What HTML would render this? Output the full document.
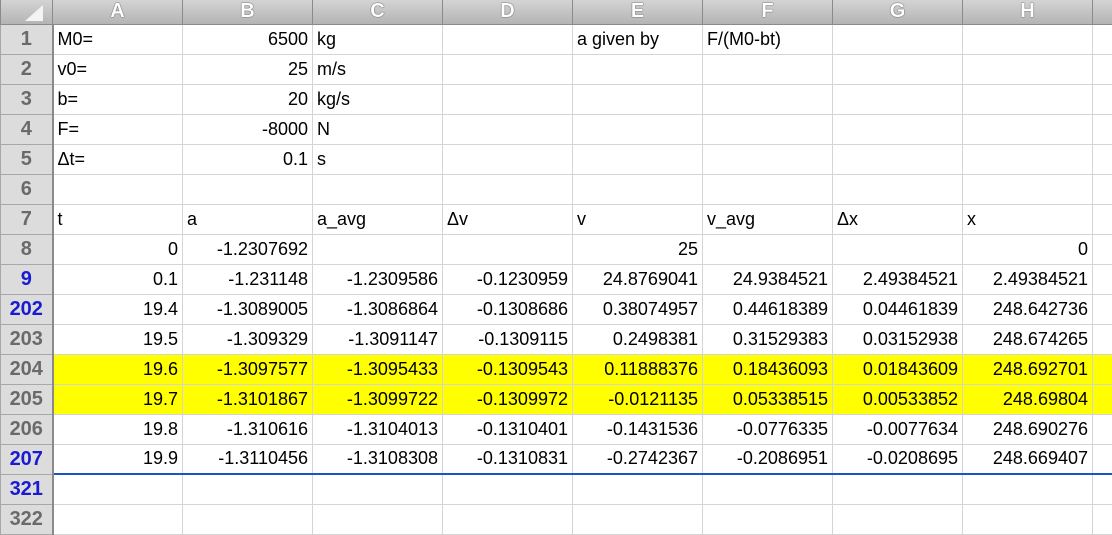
<!DOCTYPE html><html><head><style>
body{margin:0;width:1112px;height:528px;overflow:hidden;background:#fff;font-family:"Liberation Sans",Arial,sans-serif}
table{border-collapse:collapse;table-layout:fixed;position:absolute;left:0;top:0;width:1112px}
td{border:1px solid #d4d4d4;height:30px;padding:0 4px;font-size:18px;color:#000;white-space:nowrap;overflow:hidden;box-sizing:border-box}
tr.h td{height:24px;background:linear-gradient(#d4d4d4,#b4b4b4);border-color:#8a8a8a;border-top:none;text-align:center;color:#fff;font-weight:bold;font-size:20px;text-shadow:0 0 1px #444,0 0 1px #444}
td.r{background:#dcdcdc;border-color:#a8a8a8;border-right:2px solid #8a8a8a;text-align:center;color:#6a6a6a;font-weight:bold;font-size:20px;padding:0}
td.b{color:#1a1ad0}
td.n{text-align:right}
tr.y td:not(.r){background:#ffff00}
tr.bl td:not(.r){border-bottom:2px solid #1a55c8}
</style></head><body>
<table>
<colgroup><col style="width:52px"><col style="width:130px"><col style="width:130px"><col style="width:130px"><col style="width:130px"><col style="width:130px"><col style="width:130px"><col style="width:130px"><col style="width:130px"><col style="width:20px"></colgroup>
<tr class="h"><td style="padding:0;background:linear-gradient(#d4d4d4,#b4b4b4)"><svg width="40" height="22" style="display:block;margin-left:6px"><polygon points="36,4 36,20 18,20" fill="#f4f4f4"/></svg></td><td>A</td><td>B</td><td>C</td><td>D</td><td>E</td><td>F</td><td>G</td><td>H</td><td></td></tr>
<tr><td class="r">1</td><td>M0=</td><td class="n">6500</td><td>kg</td><td></td><td>a given by</td><td>F/(M0-bt)</td><td></td><td></td><td></td></tr>
<tr><td class="r">2</td><td>v0=</td><td class="n">25</td><td>m/s</td><td></td><td></td><td></td><td></td><td></td><td></td></tr>
<tr><td class="r">3</td><td>b=</td><td class="n">20</td><td>kg/s</td><td></td><td></td><td></td><td></td><td></td><td></td></tr>
<tr><td class="r">4</td><td>F=</td><td class="n">-8000</td><td>N</td><td></td><td></td><td></td><td></td><td></td><td></td></tr>
<tr><td class="r">5</td><td>Δt=</td><td class="n">0.1</td><td>s</td><td></td><td></td><td></td><td></td><td></td><td></td></tr>
<tr><td class="r">6</td><td></td><td></td><td></td><td></td><td></td><td></td><td></td><td></td><td></td></tr>
<tr><td class="r">7</td><td>t</td><td>a</td><td>a_avg</td><td>Δv</td><td>v</td><td>v_avg</td><td>Δx</td><td>x</td><td></td></tr>
<tr><td class="r">8</td><td class="n">0</td><td class="n">-1.2307692</td><td></td><td></td><td class="n">25</td><td></td><td></td><td class="n">0</td><td></td></tr>
<tr><td class="r b">9</td><td class="n">0.1</td><td class="n">-1.231148</td><td class="n">-1.2309586</td><td class="n">-0.1230959</td><td class="n">24.8769041</td><td class="n">24.9384521</td><td class="n">2.49384521</td><td class="n">2.49384521</td><td></td></tr>
<tr><td class="r b">202</td><td class="n">19.4</td><td class="n">-1.3089005</td><td class="n">-1.3086864</td><td class="n">-0.1308686</td><td class="n">0.38074957</td><td class="n">0.44618389</td><td class="n">0.04461839</td><td class="n">248.642736</td><td></td></tr>
<tr><td class="r">203</td><td class="n">19.5</td><td class="n">-1.309329</td><td class="n">-1.3091147</td><td class="n">-0.1309115</td><td class="n">0.2498381</td><td class="n">0.31529383</td><td class="n">0.03152938</td><td class="n">248.674265</td><td></td></tr>
<tr class="y"><td class="r">204</td><td class="n">19.6</td><td class="n">-1.3097577</td><td class="n">-1.3095433</td><td class="n">-0.1309543</td><td class="n">0.11888376</td><td class="n">0.18436093</td><td class="n">0.01843609</td><td class="n">248.692701</td><td></td></tr>
<tr class="y"><td class="r">205</td><td class="n">19.7</td><td class="n">-1.3101867</td><td class="n">-1.3099722</td><td class="n">-0.1309972</td><td class="n">-0.0121135</td><td class="n">0.05338515</td><td class="n">0.00533852</td><td class="n">248.69804</td><td></td></tr>
<tr><td class="r">206</td><td class="n">19.8</td><td class="n">-1.310616</td><td class="n">-1.3104013</td><td class="n">-0.1310401</td><td class="n">-0.1431536</td><td class="n">-0.0776335</td><td class="n">-0.0077634</td><td class="n">248.690276</td><td></td></tr>
<tr class="bl"><td class="r b">207</td><td class="n">19.9</td><td class="n">-1.3110456</td><td class="n">-1.3108308</td><td class="n">-0.1310831</td><td class="n">-0.2742367</td><td class="n">-0.2086951</td><td class="n">-0.0208695</td><td class="n">248.669407</td><td></td></tr>
<tr><td class="r b">321</td><td></td><td></td><td></td><td></td><td></td><td></td><td></td><td></td><td></td></tr>
<tr><td class="r">322</td><td></td><td></td><td></td><td></td><td></td><td></td><td></td><td></td><td></td></tr>
</table>
</body></html>
